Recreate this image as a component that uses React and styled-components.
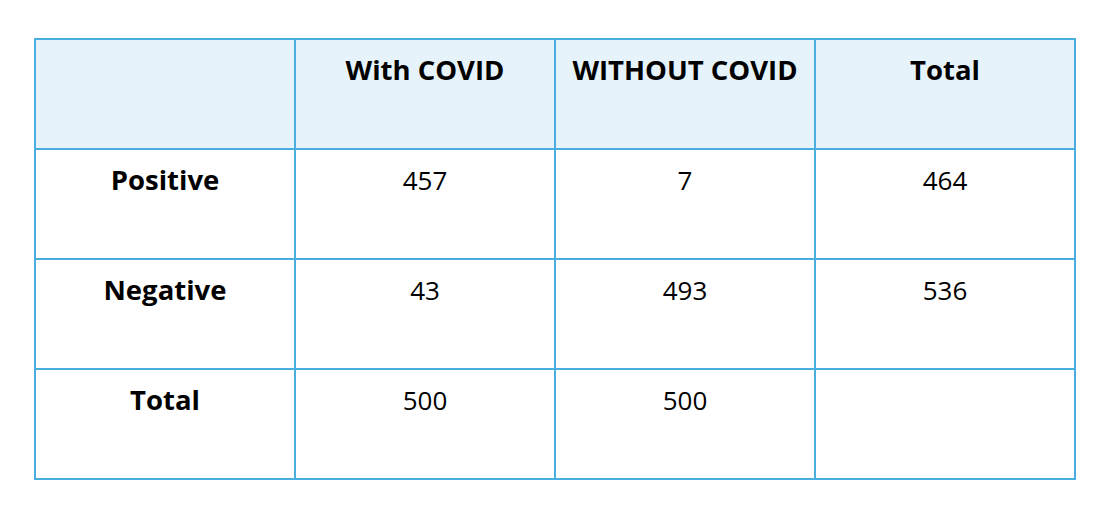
import React from "react";
import styled, { createGlobalStyle } from "styled-components";

const Global = createGlobalStyle`
  html, body { margin: 0; padding: 0; background: #ffffff; }
  body { font-family: "Open Sans", "Noto Sans", sans-serif; color: #000; }
`;

const Page = styled.div`
  width: 1112px;
  height: 512px;
  box-sizing: border-box;
  padding: 38px 0 0 34px;
`;

const Table = styled.table`
  border-collapse: collapse;
  table-layout: fixed;
  width: 1040px;
  border: 2px solid #5db6e3;
`;

const Cell = styled.td`
  width: 260px;
  height: 110px;
  box-sizing: border-box;
  border: 2px solid #4aade0;
  padding: 12px 0 0 0;
  vertical-align: top;
  text-align: center;
  font-size: ${(p) => (p.$bold ? "27.5px" : "26px")};
  line-height: 36px;
  font-weight: ${(p) => (p.$bold ? 700 : 400)};
  background: ${(p) => (p.$head ? "#e6f3fa" : "#ffffff")};
`;

const head = ["", "With COVID", "WITHOUT COVID", "Total"];
const rows = [
  ["Positive", "457", "7", "464"],
  ["Negative", "43", "493", "536"],
  ["Total", "500", "500", ""],
];

export default function App() {
  return (
    <>
      <Global />
      <Page>
        <Table>
          <thead>
            <tr>
              {head.map((h, i) => (
                <Cell as="th" key={i} $head $bold>
                  {h}
                </Cell>
              ))}
            </tr>
          </thead>
          <tbody>
            {rows.map((r, ri) => (
              <tr key={ri}>
                {r.map((c, ci) => (
                  <Cell key={ci} $bold={ci === 0}>
                    {c}
                  </Cell>
                ))}
              </tr>
            ))}
          </tbody>
        </Table>
      </Page>
    </>
  );
}
